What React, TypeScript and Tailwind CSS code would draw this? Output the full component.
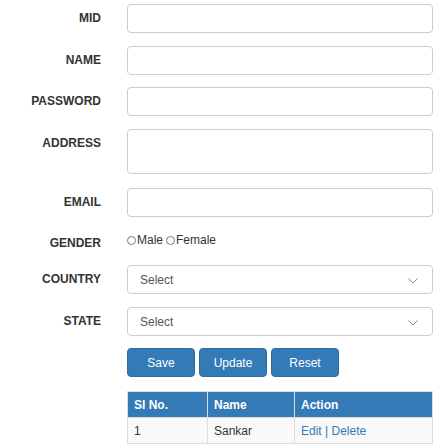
import { useState } from "react";

const labelCls =
  "w-[101px] shrink-0 text-right text-[12px] font-bold text-[#333] pt-[7px] leading-[15px]";
const inputCls =
  "w-[306px] h-[29px] border border-[#ccc] rounded-[4px] bg-white px-3 text-[12px] text-[#555] outline-none";

function Chevron() {
  return (
    <svg width="10" height="6" viewBox="0 0 10 6" className="absolute right-[14px] top-[12px]">
      <path d="M0.5 0.5 L5 5 L9.5 0.5" fill="none" stroke="#888" strokeWidth="1" />
    </svg>
  );
}

function Radio({ label, checked, onClick }: { label: string; checked: boolean; onClick: () => void }) {
  return (
    <label className="flex items-center cursor-pointer" onClick={onClick}>
      <span className="w-[9px] h-[9px] rounded-full border border-[#777] bg-white flex items-center justify-center">
        {checked && <span className="w-[5px] h-[5px] rounded-full bg-[#333]" />}
      </span>
      <span className="ml-[1px]">{label}</span>
    </label>
  );
}

export default function App() {
  const [gender, setGender] = useState("");

  return (
    <div className="w-[438px] h-[447px] bg-white pt-[4px] font-['Liberation_Sans',Arial,sans-serif]">
      <div className="flex">
        <div className={labelCls}>MID</div>
        <input className={`${inputCls} ml-[26px]`} />
      </div>
      <div className="flex mt-[13px]">
        <div className={labelCls}>NAME</div>
        <input className={`${inputCls} ml-[26px]`} />
      </div>
      <div className="flex mt-[12px]">
        <div className={labelCls}>PASSWORD</div>
        <input type="password" className={`${inputCls} ml-[26px]`} />
      </div>
      <div className="flex mt-[13px]">
        <div className={labelCls}>ADDRESS</div>
        <textarea className="w-[306px] h-[45px] ml-[26px] border border-[#ccc] rounded-[4px] bg-white px-3 py-1 text-[12px] text-[#555] outline-none resize-none" />
      </div>
      <div className="flex mt-[14px]">
        <div className={labelCls}>EMAIL</div>
        <input className={`${inputCls} ml-[26px]`} />
      </div>
      <div className="flex mt-[12px] h-[23px]">
        <div className={labelCls}>GENDER</div>
        <div className="ml-[26px] flex items-start gap-[3px] pt-[4px] text-[12px] leading-[14px] text-[#333]">
          <Radio label="Male" checked={gender === "m"} onClick={() => setGender("m")} />
          <Radio label="Female" checked={gender === "f"} onClick={() => setGender("f")} />
        </div>
      </div>
      <div className="flex mt-[13px]">
        <div className={labelCls}>COUNTRY</div>
        <div className={`${inputCls} ml-[26px] relative flex items-center`}>
          <span>Select</span>
          <Chevron />
        </div>
      </div>
      <div className="flex mt-[13px]">
        <div className={labelCls}>STATE</div>
        <div className={`${inputCls} ml-[26px] relative flex items-center`}>
          <span>Select</span>
          <Chevron />
        </div>
      </div>
      <div className="flex mt-[12px] ml-[127px] gap-[4px]">
        <button className="w-[68px] h-[29px] rounded-[4px] bg-[#337ab7] border border-[#2e6da4] text-white text-[12px]">
          Save
        </button>
        <button className="w-[68px] h-[29px] rounded-[4px] bg-[#337ab7] border border-[#2e6da4] text-white text-[12px]">
          Update
        </button>
        <button className="w-[68px] h-[29px] rounded-[4px] bg-[#337ab7] border border-[#2e6da4] text-white text-[12px]">
          Reset
        </button>
      </div>
      <table className="mt-[14px] ml-[127px] w-[306px] border-collapse text-[12px]">
        <thead>
          <tr className="bg-[#337ab7] text-white font-bold h-[26px]">
            <th className="w-[80px] border border-[#ddd] text-left font-bold px-[6px]">SI No.</th>
            <th className="w-[87px] border border-[#ddd] text-left font-bold px-[6px]">Name</th>
            <th className="border border-[#ddd] text-left font-bold px-[6px]">Action</th>
          </tr>
        </thead>
        <tbody>
          <tr className="bg-[#f9f9f9] text-[#333] h-[26px]">
            <td className="border border-[#ddd] px-[6px]">1</td>
            <td className="border border-[#ddd] px-[6px]">Sankar</td>
            <td className="border border-[#ddd] px-[6px] text-[#337ab7]">
              <a href="#">Edit</a> | <a href="#">Delete</a>
            </td>
          </tr>
        </tbody>
      </table>
    </div>
  );
}
